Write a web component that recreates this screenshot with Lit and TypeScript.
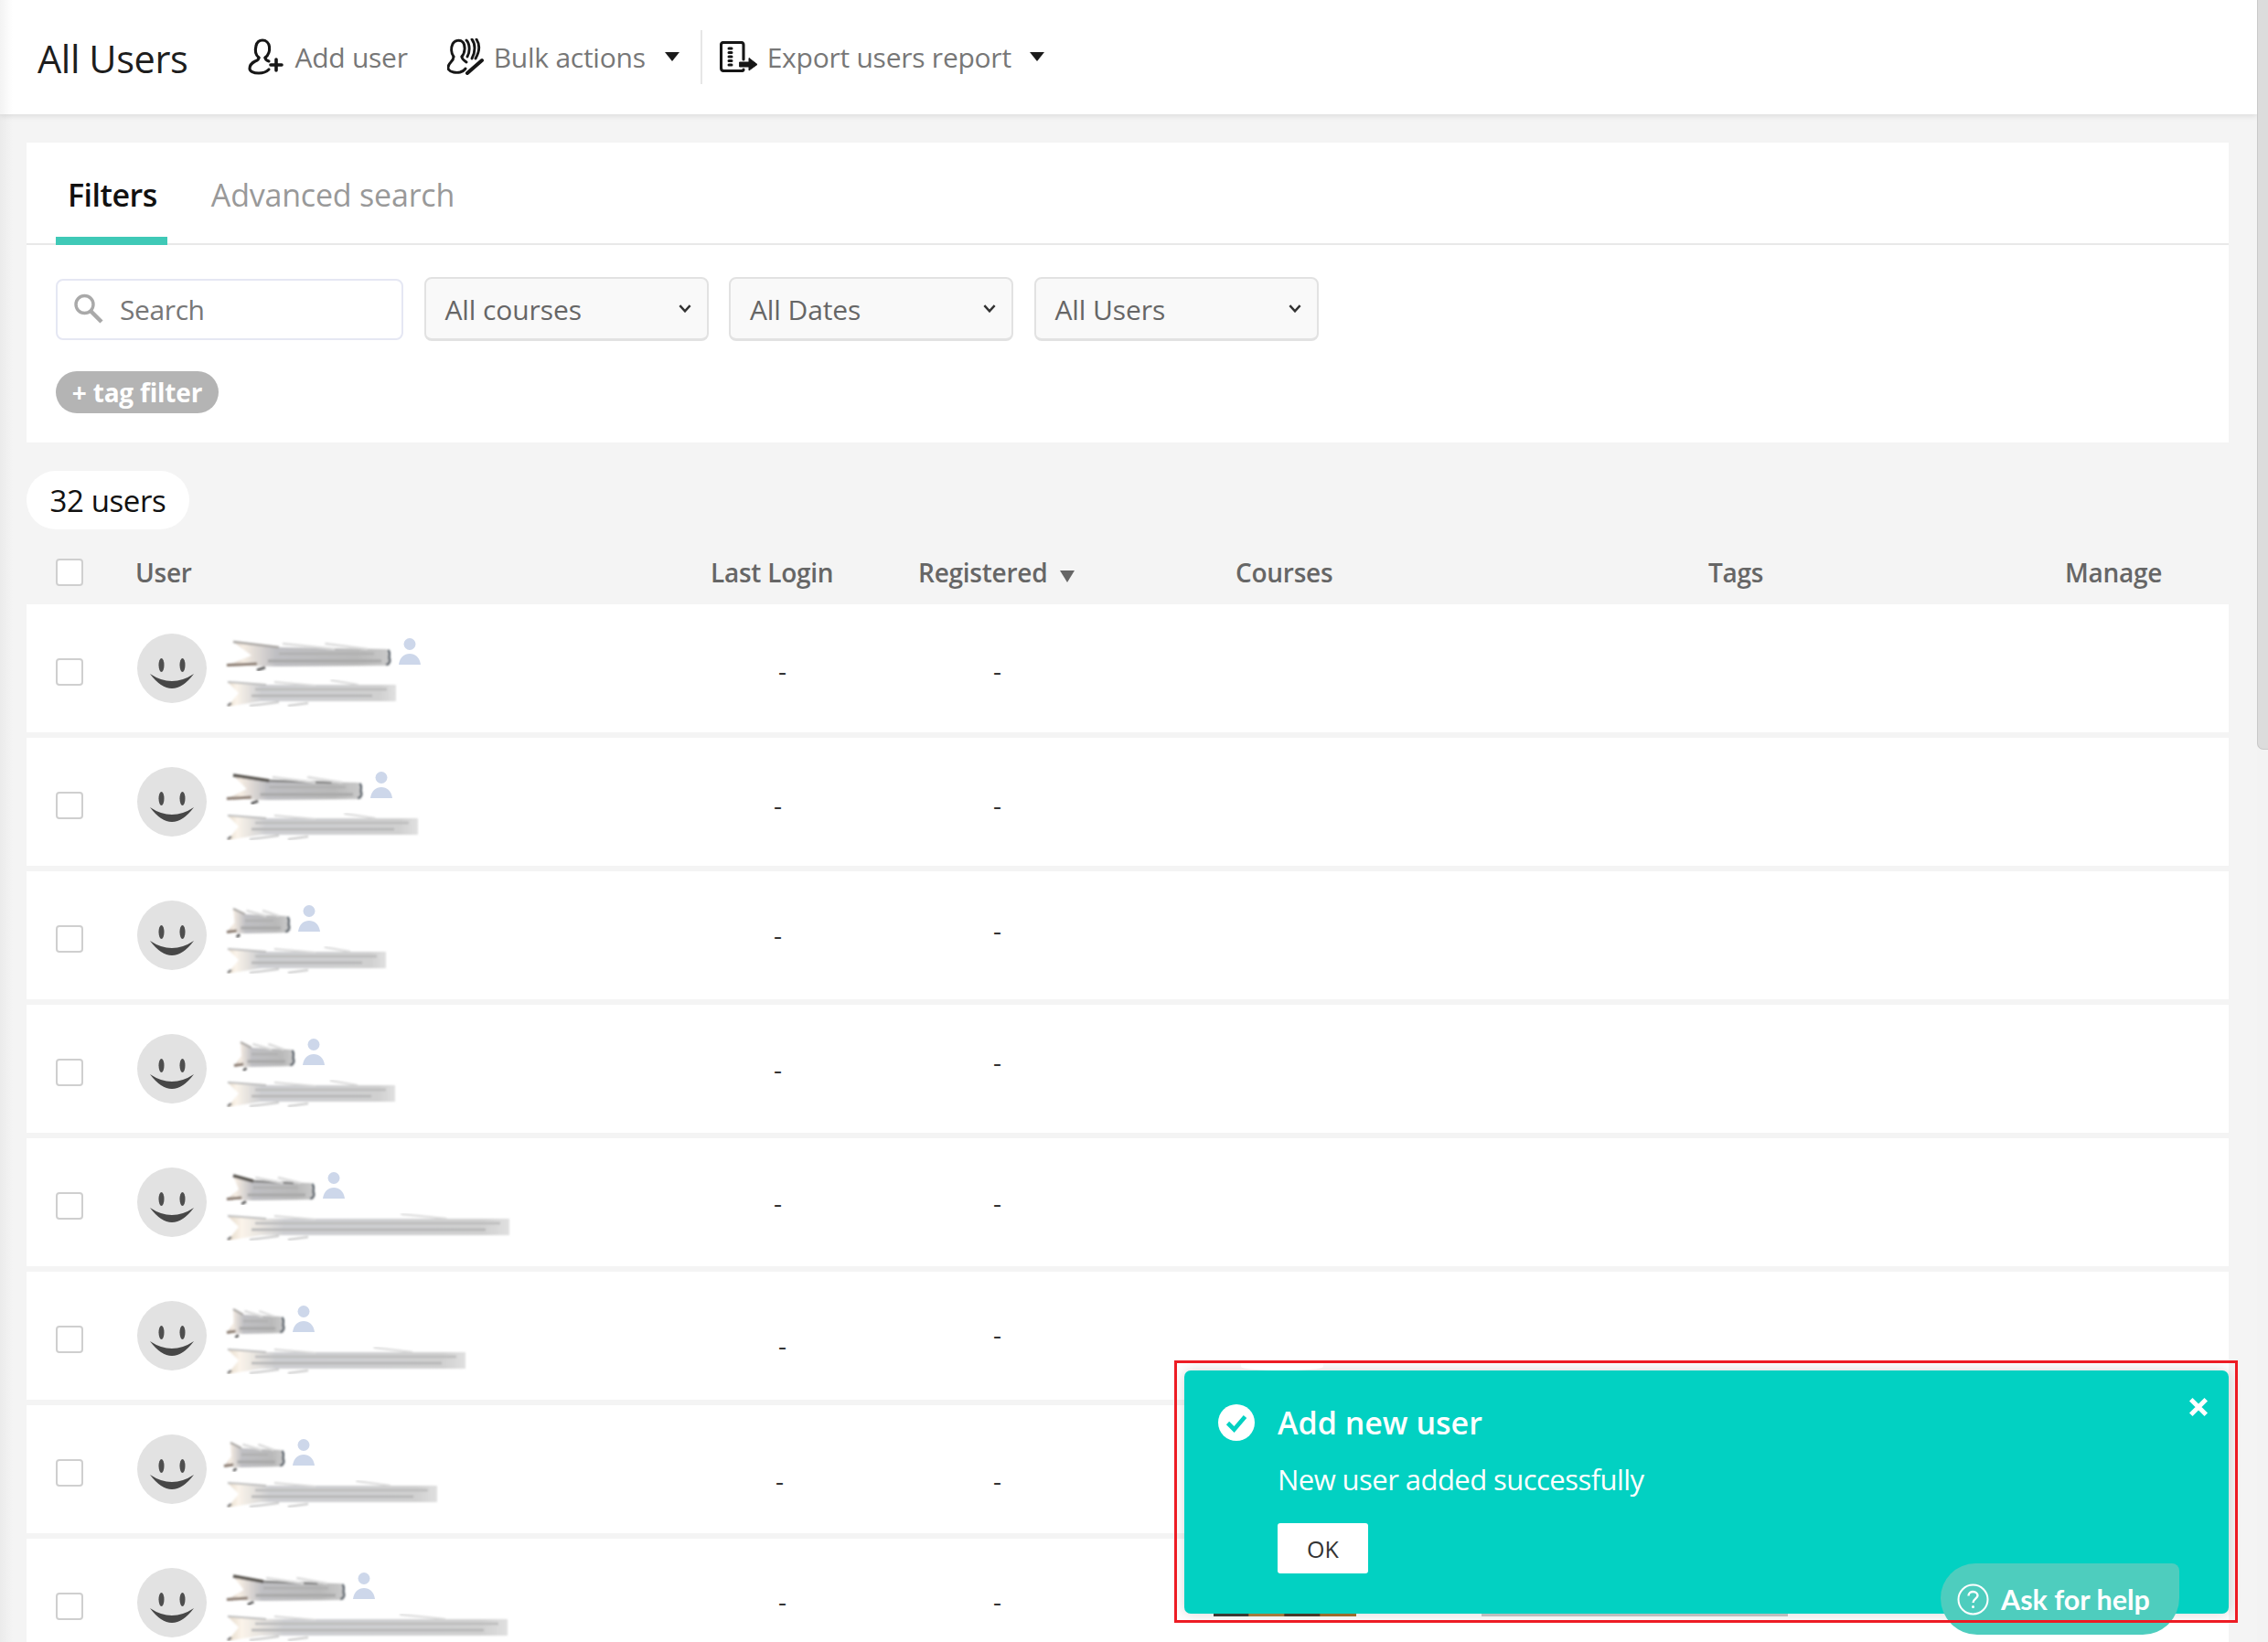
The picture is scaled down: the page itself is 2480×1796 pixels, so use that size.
import { LitElement, html, css, svg } from "lit";
import { customElement } from "lit/decorators.js";

interface Row { name: number; email: number; nameX: number; d1x: number; d1y: number; d2y: number; dark?: boolean; }
const ROWS: Row[] = [
  { name: 178, email: 188, nameX: 0, d1x: 74, d1y: 3, d2y: 3 },
  { name: 147, email: 212, nameX: 0, d1x: 69, d1y: 4, d2y: 4, dark: true },
  { name: 68, email: 177, nameX: 0, d1x: 69, d1y: 0, d2y: -5 },
  { name: 65, email: 187, nameX: 8, d1x: 69, d1y: 1, d2y: -7 },
  { name: 95, email: 312, nameX: 0, d1x: 69, d1y: 1, d2y: 1, dark: true },
  { name: 62, email: 264, nameX: 0, d1x: 74, d1y: 11, d2y: -1 },
  { name: 65, email: 233, nameX: -3, d1x: 71, d1y: 13, d2y: 13 },
  { name: 128, email: 310, nameX: 0, d1x: 74, d1y: -1, d2y: -1, dark: true },
];

const caret = html`<svg class="caret" viewBox="0 0 16 10"><path d="M0 0H16L8 10Z" fill="#1b1b1b"/></svg>`;
const chevron = html`<svg class="chev" viewBox="0 0 12 8"><path d="M1 1L6 6.5L11 1" fill="none" stroke="#333" stroke-width="2.2"/></svg>`;

function nameSmear(w: number, i: number, dark?: boolean) {
  const k = Math.min(1, w / 178);
  const a = 60 * k;
  return html`<svg class="smear" width=${w + 12} height="44" viewBox="0 0 ${w + 12} 44">
    <defs>
      <linearGradient id="n${i}" x1="0" x2="1" y1="0" y2="0">
        <stop offset="0" stop-color="#c9bfb6"/><stop offset=".1" stop-color="#f6ede3"/>
        <stop offset=".3" stop-color="#bfbfc3"/><stop offset=".8" stop-color="#b9b9b9"/>
        <stop offset="1" stop-color="#cacaca"/>
      </linearGradient>
      <filter id="nb${i}" x="-5%" y="-20%" width="110%" height="140%"><feGaussianBlur stdDeviation="1.3"/></filter>
    </defs>
    <g filter="url(#nb${i})">
      ${svg`<path d="M10 12L${a} 18L${w} 20L${w + 3} 38L${a} 39L3 38L${a * 0.5} 27Z" fill="url(#n${i})"/>
      <path d="M${a * 0.8} 33H${w - 6}" stroke="#a8a8a8" stroke-width="3"/>
      <path d="M${a} 25H${w - 14}" stroke="#b0b0b0" stroke-width="2.4"/>
      <path d="M10 12L${a} 18" stroke="${dark ? "#57534e" : "#aaa7a4"}" stroke-width="${dark ? 3.4 : 2.4}"/>
      ${dark ? svg`<path d="M${a} 18L${w * 0.8} 20" stroke="#808080" stroke-width="2.6"/>` : ""}
      <path d="M3 37.500L${a * 0.6} 36" stroke="#8a7b71" stroke-width="3"/>
      <path d="M${a * 0.6} 43L${a * 0.75} 40" stroke="#666" stroke-width="3"/>
      <path d="M${w * 0.36} 14L${w * 0.68} 20M${w * 0.62} 14L${w * 0.88} 20" stroke="#dcdcdc" stroke-width="2.4"/>
      <path d="M${w + 1} 21C${w + 5} 24 ${w + 1} 28 ${w + 3} 31C${w + 4} 34 ${w + 2} 37 ${w - 1} 37" fill="none" stroke="#5c646c" stroke-width="2.6"/>`}
    </g>
  </svg>`;
}

function emailSmear(w: number, i: number) {
  return html`<svg class="smear" width=${w + 6} height="30" viewBox="0 0 ${w + 6} 30">
    <defs>
      <linearGradient id="e${i}" x1="0" x2="1" y1="0" y2="0">
        <stop offset="0" stop-color="#e4d8c8"/><stop offset=".05" stop-color="#fbf4ea"/>
        <stop offset=".2" stop-color="#cdced1"/><stop offset=".9" stop-color="#d0d0d0"/>
        <stop offset="1" stop-color="#e0e0e0"/>
      </linearGradient>
      <filter id="eb${i}" x="-5%" y="-20%" width="110%" height="140%"><feGaussianBlur stdDeviation="1.1"/></filter>
    </defs>
    <g filter="url(#eb${i})">
      ${svg`<path d="M4 3L46 6H${w}V24H40L4 30L16 15Z" fill="url(#e${i})"/>
      <path d="M34 11H${w - 10}" stroke="#bbbbbb" stroke-width="2.4"/>
      <path d="M30 18H${w - 26}" stroke="#b4b4b4" stroke-width="2.6"/>
      <path d="M4 3L46 6" stroke="#bcbcbc" stroke-width="2"/>
      <path d="M55 3L100 7M${w * 0.62} 1L${w * 0.78} 6" stroke="#d8d8d8" stroke-width="2.2"/>
      <path d="M28 29L60 25M70 29L92 26" stroke="#c6c6c6" stroke-width="2.2"/>
      <path d="M4 29L8 26" stroke="#777" stroke-width="2.4"/>`}
    </g>
  </svg>`;
}

const avatar = html`<svg class="avatar" viewBox="0 0 76 76">
  <circle cx="38" cy="38" r="38" fill="#e2e2e2"/>
  <ellipse cx="26.5" cy="34.5" rx="3" ry="7.5" fill="#4e4e4e"/>
  <ellipse cx="49.5" cy="34.5" rx="3" ry="7.5" fill="#4e4e4e"/>
  <path d="M14 44Q38 76 62 44Q38 60 14 44Z" fill="#474747"/>
</svg>`;

const person = html`<svg class="person" viewBox="0 0 24 29">
  <ellipse cx="12" cy="6.5" rx="6.5" ry="6.5" fill="#cdd7ea"/>
  <path d="M0 29C1 21 6 17 12 17C18 17 23 21 24 29Z" fill="#cdd7ea"/>
</svg>`;

@customElement("app-root")
export class AppRoot extends LitElement {
  static styles = css`
    :host { display: block; position: relative; width: 2480px; height: 1796px; overflow: hidden;
      font-family: "Open Sans", "Noto Sans", sans-serif; background: #f4f4f4; color: #222; }
    .page { display: flex; width: 2480px; height: 1796px; }
    .main { width: 2468px; height: 1796px; overflow: hidden;
      background: linear-gradient(to right, #ebebeb, #f4f4f4 14px); }
    .scroll { width: 12px; height: 1796px; background: #f3f3f3; }
    .thumb { height: 820px; background: #dcdcdc; border-left: 1px solid #c9c9c9; border-bottom: 1px solid #c9c9c9;
      border-radius: 0 0 0 7px; box-sizing: border-box; }

    header { height: 125px; background: linear-gradient(to right, #f3f3f3, #fff 14px); box-shadow: 0 2px 6px rgba(0,0,0,.1);
      display: flex; align-items: center; padding-left: 41px; box-sizing: border-box; position: relative; }
    h1 { margin: 3px 65px 0 0; font-size: 41.5px; font-weight: 500; color: #1d1d1d; white-space: nowrap; letter-spacing: -.4px; }
    .act { display: flex; align-items: center; font-size: 30px; color: #777; white-space: nowrap; letter-spacing: -.25px; margin-top: -1px; }
    .act svg.ic { display: block; flex: none; }
    .act1 { margin-right: 43px; }
    .act1 .ic { width: 40px; height: 40px; margin-right: 12px; }
    .act2 .ic { width: 40px; height: 40px; margin-right: 11px; }
    .act3 .ic { width: 42px; height: 34px; margin-right: 10px; }
    .caret { width: 16px; height: 10px; margin-left: 20px; flex: none; display: block; }
    .act2 .caret { margin-left: 21px; }
    .divider { width: 2px; height: 59px; background: #e6e6e6; margin: 0 19px 0 23px; }

    .content { padding: 31px 31px 0 29px; }
    .card { height: 328px; background: #fff; box-sizing: border-box; }
    .tabs { height: 112px; border-bottom: 2px solid #e8e8e8; display: flex; padding-left: 32px; box-sizing: border-box; }
    .tab { font-size: 34px; color: #999; height: 112px; box-sizing: border-box; display: flex; align-items: center;
      padding: 2px 0 0; letter-spacing: -.2px; white-space: nowrap; }
    .tab.on { color: #111; font-weight: 600; border-bottom: 9px solid #3fc9b7; padding: 11px 11px 0 13px; margin-right: 48px; letter-spacing: -.5px; }
    .filters { display: flex; align-items: center; gap: 22.5px; padding: 35px 0 0 32px; }
    .search { width: 380px; height: 67px; border: 2px solid #e5e7f3; border-radius: 8px; box-sizing: border-box;
      display: flex; align-items: center; padding-left: 17px; font-size: 30px; color: #777; letter-spacing: -.4px; background: #fff; }
    .search svg { width: 34px; height: 36px; margin-right: 17px; flex: none; }
    .select { width: 311px; height: 70px; border: 2px solid #e2e2e2; border-bottom-width: 3px; border-radius: 8px; background: #f9f9f9;
      box-sizing: border-box; display: flex; align-items: center; justify-content: space-between; padding: 0 17px 0 21px;
      font-size: 30px; color: #666; letter-spacing: -.1px; white-space: nowrap; }
    .chev { width: 14px; height: 9px; flex: none; }
    .select span { margin-top: 2px; }
    .tag { margin: 33px 0 0 32px; width: 178px; height: 46px; border-radius: 23px; background: #b4b4b4; color: #fff;
      font-size: 28px; font-weight: 700; display: flex; align-items: center; justify-content: center; letter-spacing: -.2px; white-space: nowrap; }

    .pill { margin-top: 31px; width: 178px; height: 64px; border-radius: 32px; background: #fff; display: flex; align-items: center; justify-content: center;
      font-size: 33px; font-weight: 500; color: #111; letter-spacing: -.4px; white-space: nowrap; padding-top: 1px; box-sizing: border-box; }
    .grid { display: grid; grid-template-columns: 87px 629px 227px 347px 517px 390px 1fr; padding-left: 32px; box-sizing: border-box; }
    .thead { height: 82px; padding-top: 11px; align-items: center; font-size: 28px; font-weight: 600; color: #666; letter-spacing: -.25px; white-space: nowrap; }
    .thead .tri { display: inline-block; width: 16px; height: 13px; margin-left: 14px; }
    .box { width: 30px; height: 30px; border: 2px solid #cfcfcf; border-radius: 4px; box-sizing: border-box; background: #fff; display: block; }
    .row { height: 140px; background: #fff; margin-bottom: 6px; align-items: center; }
    .row .box { margin-top: 8px; }
    .user { display: flex; margin-left: 2px; align-items: center; height: 140px; }
    .avatar { width: 76px; height: 76px; flex: none; display: block; }
    .who { display: flex; flex-direction: column; align-self: flex-start; padding: 29px 0 0 19px; gap: 9px; }
    .line { display: flex; align-items: flex-start; }
    .smear { display: block; flex: none; }
    .person { width: 24px; height: 29px; flex: none; margin: 8px 0 0 1px; }
    .dash { font-size: 28px; color: #333; line-height: 30px; }

    .toast { position: absolute; left: 1295px; top: 1499px; width: 1142px; height: 266px; border-radius: 7px; background: #02d1c2;
      box-shadow: 0 0 14px rgba(0,0,0,.16); box-sizing: border-box; padding: 37px 0 0 37px; color: #fff; }
    .t-head { display: flex; align-items: center; height: 40px; gap: 25px; }
    .t-head svg { width: 40px; height: 40px; flex: none; }
    .t-title { font-size: 34px; font-weight: 600; letter-spacing: 0; white-space: nowrap; }
    .t-body { margin-left: 65px; }
    .t-msg { margin-top: 22px; font-size: 31px; line-height: 40px; letter-spacing: -.55px; white-space: nowrap; }
    .t-btn { margin-top: 28px; width: 99px; height: 55px; background: #fff; border-radius: 3px; color: #333; font-size: 25px;
      display: flex; align-items: center; justify-content: center; }
    .t-close { position: absolute; right: 22px; top: 29px; width: 22px; height: 22px; }
    .strip { position: absolute; left: 32px; top: 100%; width: 156px; height: 3px;
      background: linear-gradient(to right, #3c3a34 0 24%, #a47a3e 25% 49%, #4a3a2a 50% 74%, #9a6c2e 75%); }
    .strip2 { position: absolute; left: 325px; top: 100%; width: 335px; height: 3px; background: #bdbdbd; }
    .arc { position: absolute; left: 62px; top: -8px; width: 90px; height: 8px; background: #fff; border-radius: 0 0 50% 50%; }

    .help { position: absolute; left: 2122px; top: 1710px; width: 261px; height: 78px; background: #4ecdbe; color: #fff;
      border-radius: 38px 8px 40px 40px; display: flex; align-items: center; box-sizing: border-box; padding-left: 18px;
      font-family: Lato, "Open Sans", sans-serif; font-size: 30.5px; font-weight: 700; gap: 13px; white-space: nowrap; }
    .help svg { width: 35px; height: 35px; flex: none; }
    .frame { position: absolute; left: 1284px; top: 1488px; width: 1163px; height: 287px; border: 3px solid #ed1c24; box-sizing: border-box; pointer-events: none; }
  `;

  render() {
    return html`
      <div class="page">
        <div class="main">
          <header>
            <h1>All Users</h1>
            <div class="act act1">
              <svg class="ic" viewBox="0 0 40 40" fill="none" stroke="#161616" stroke-width="3.1" stroke-linecap="round">
                <path d="M13 21C9 18 9 12 10 8C11 4 14 2 17 2C21 2 24 5 24.500 9C25 13 24 18 20 21"/>
                <path d="M13 21C13 23 12 24 9 25C5 27 3 30 3 33C3 36 7 38 13 38C17 38 21 37 24 34"/>
                <path d="M20 21C20 23 21 24 24 25"/>
                <path d="M32 23V35M26 29H38" stroke-width="3.6"/>
              </svg>
              <span>Add user</span>
            </div>
            <div class="act act2">
              <svg class="ic" viewBox="0 0 40 40" fill="none" stroke="#161616" stroke-width="2.9" stroke-linecap="round">
                <path d="M7 20C4 16 4 10 6 6C8 2 14 1 17 4C20 7 20 15 16 20"/>
                <path d="M7 20C7 23 6 24 4 26C1 29 0.500 32 1.500 34C3.500 37 10 38 14 37C17 36 19 35 20 33"/>
                <path d="M16 20C16 22 18 24 21 26"/>
                <path d="M21 2C25 6 25 15 22 20M27 1C31 6 31 15 27 22M32 1C36 7 35 15 31 22"/>
                <path d="M22 38L38 24" stroke-width="4"/>
              </svg>
              <span>Bulk actions</span>${caret}
            </div>
            <div class="divider"></div>
            <div class="act act3">
              <svg class="ic" viewBox="0 0 42 34" fill="none" stroke="#161616" stroke-width="3.1" stroke-linecap="round">
                <path d="M26 20V4C26 2.500 25 1.500 23.500 1.500H4C2.500 1.500 1.500 2.500 1.500 4V29C1.500 31 2.500 32.500 4 32.500H24C25.500 32.500 26 31.500 26 31"/>
                <path d="M10 8H13M10 12.500H13M10 17H13M10 21.500H13M10 26H13" stroke-width="3"/>
                <path d="M22 23H32V18.500L41 25.500L32 32V28H22Z" fill="#161616" stroke-width="1"/>
              </svg>
              <span>Export users report</span>${caret}
            </div>
          </header>

          <div class="content">
            <section class="card">
              <div class="tabs">
                <div class="tab on">Filters</div>
                <div class="tab">Advanced search</div>
              </div>
              <div class="filters">
                <div class="search">
                  <svg viewBox="0 0 34 36" fill="none" stroke="#a9a9a9" stroke-width="3.400"><circle cx="12.500" cy="13" r="9.500"/><path d="M19.500 20.500L31 32" stroke-width="4.500"/></svg>
                  <span>Search</span>
                </div>
                <div class="select"><span>All courses</span>${chevron}</div>
                <div class="select"><span>All Dates</span>${chevron}</div>
                <div class="select"><span>All Users</span>${chevron}</div>
              </div>
              <div class="tag">+ tag filter</div>
            </section>

            <div class="pill">32 users</div>

            <div class="grid thead">
              <span class="box"></span>
              <span>User</span>
              <span>Last Login</span>
              <span>Registered<svg class="tri" viewBox="0 0 16 13"><path d="M0 0H16L8 13Z" fill="#666"/></svg></span>
              <span>Courses</span>
              <span>Tags</span>
              <span>Manage</span>
            </div>

            ${ROWS.map((r, i) => html`
              <div class="grid row">
                <span class="box"></span>
                <div class="user">
                  ${avatar}
                  <div class="who">
                    <div class="line" style="margin-left:${r.nameX}px">${nameSmear(r.name, i, r.dark)}${person}</div>
                    <div class="line">${emailSmear(r.email, i)}</div>
                  </div>
                </div>
                <span class="dash" style="margin:${r.d1y * 2 - 3}px 0 0 ${r.d1x}px">-</span>
                <span class="dash" style="margin:${r.d2y * 2 - 3}px 0 0 82px">-</span>
              </div>
            `)}
          </div>
        </div>
        <div class="scroll"><div class="thumb"></div></div>
      </div>

      <div class="toast">
        <div class="strip"></div>
        <div class="strip2"></div>
        <div class="arc"></div>
        <div class="t-head">
          <svg viewBox="0 0 40 40"><circle cx="20" cy="20" r="20" fill="#fff"/><path d="M10.500 20.500L17.500 27.500L29.500 13.500" fill="none" stroke="#02d1c2" stroke-width="4.600"/></svg>
          <div class="t-title">Add new user</div>
        </div>
        <div class="t-body">
          <div class="t-msg">New user added successfully</div>
          <div class="t-btn">OK</div>
        </div>
        <svg class="t-close" viewBox="0 0 20 20"><path d="M2.500 2.500L17.500 17.500M17.500 2.500L2.500 17.500" stroke="#fff" stroke-width="4.500"/></svg>
      </div>
      <div class="help">
        <svg viewBox="0 0 35 35" fill="none" stroke="#fff" stroke-width="2"><circle cx="17.500" cy="17.500" r="16"/><path d="M12.500 13.500C12.500 10.500 15 9 17.500 9C20.500 9 22.500 11 22.500 13.300C22.500 16.500 17.500 17 17.500 21" stroke-width="2.400"/><circle cx="17.500" cy="25.500" r="1.500" fill="#fff" stroke="none"/></svg>
        <span>Ask for help</span>
      </div>
      <div class="frame"></div>
    `;
  }
}
